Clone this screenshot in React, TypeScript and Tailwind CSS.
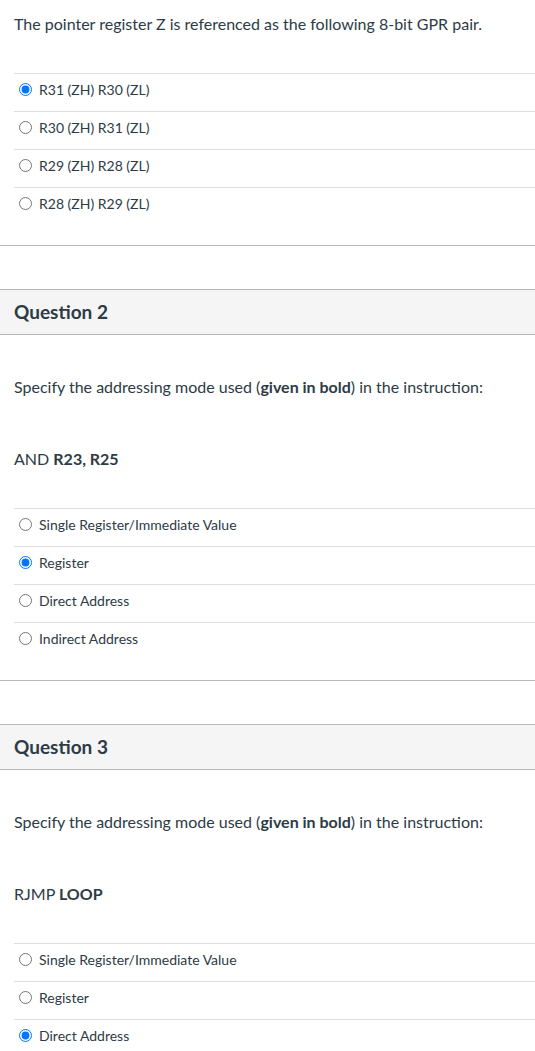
import React from 'react'

type Question = {
  title?: string
  text: React.ReactNode
  code?: React.ReactNode
  answers: string[]
  selected: number
  name: string
}

const questions: Question[] = [
  {
    text: 'The pointer register Z is referenced as the following 8-bit GPR pair.',
    answers: ['R31 (ZH) R30 (ZL)', 'R30 (ZH) R31 (ZL)', 'R29 (ZH) R28 (ZL)', 'R28 (ZH) R29 (ZL)'],
    selected: 0,
    name: 'q1',
  },
  {
    title: 'Question 2',
    text: (
      <>
        Specify the addressing mode used (<b>given in bold</b>) in the instruction:
      </>
    ),
    code: (
      <>
        AND <b>R23, R25</b>
      </>
    ),
    answers: ['Single Register/Immediate Value', 'Register', 'Direct Address', 'Indirect Address'],
    selected: 1,
    name: 'q2',
  },
  {
    title: 'Question 3',
    text: (
      <>
        Specify the addressing mode used (<b>given in bold</b>) in the instruction:
      </>
    ),
    code: (
      <>
        RJMP <b>LOOP</b>
      </>
    ),
    answers: ['Single Register/Immediate Value', 'Register', 'Direct Address', 'Indirect Address'],
    selected: 2,
    name: 'q3',
  },
]

function QuestionBlock({ q }: { q: Question }) {
  return (
    <div className="mb-[43px] border-b border-[#b4b9bd]">
      {q.title && (
        <div className="h-[46px] flex items-center px-[14px] bg-[#f5f5f5] border-y border-[#b4b9bd]">
          <h2 className="text-[19px] font-bold text-[#2d3b45]">{q.title}</h2>
        </div>
      )}
      <div className={q.title ? 'pt-[40px]' : 'pt-[12px]'}>
        <p className="px-[14px] text-[16px] leading-[24px]">{q.text}</p>
        {q.code && <p className="px-[14px] mt-[48px] text-[16px] leading-[24px]">{q.code}</p>}
        <div className="mt-[37px] ml-[14px] pb-[20px]">
          {q.answers.map((a, i) => (
            <label
              key={a}
              className="h-[38px] pb-[6px] flex items-center border-t border-[#dcdee0] text-[14px]"
            >
              <input
                type="radio"
                name={q.name}
                defaultChecked={i === q.selected}
                className="m-0 ml-[5px] mr-[7px] w-[13px] h-[13px]"
              />
              <span>{a}</span>
            </label>
          ))}
        </div>
      </div>
    </div>
  )
}

export default function App() {
  return (
    <div className="w-[535px] bg-white text-[#2d3b45] font-['Lato',sans-serif]">
      {questions.map((q) => (
        <QuestionBlock key={q.name} q={q} />
      ))}
    </div>
  )
}
